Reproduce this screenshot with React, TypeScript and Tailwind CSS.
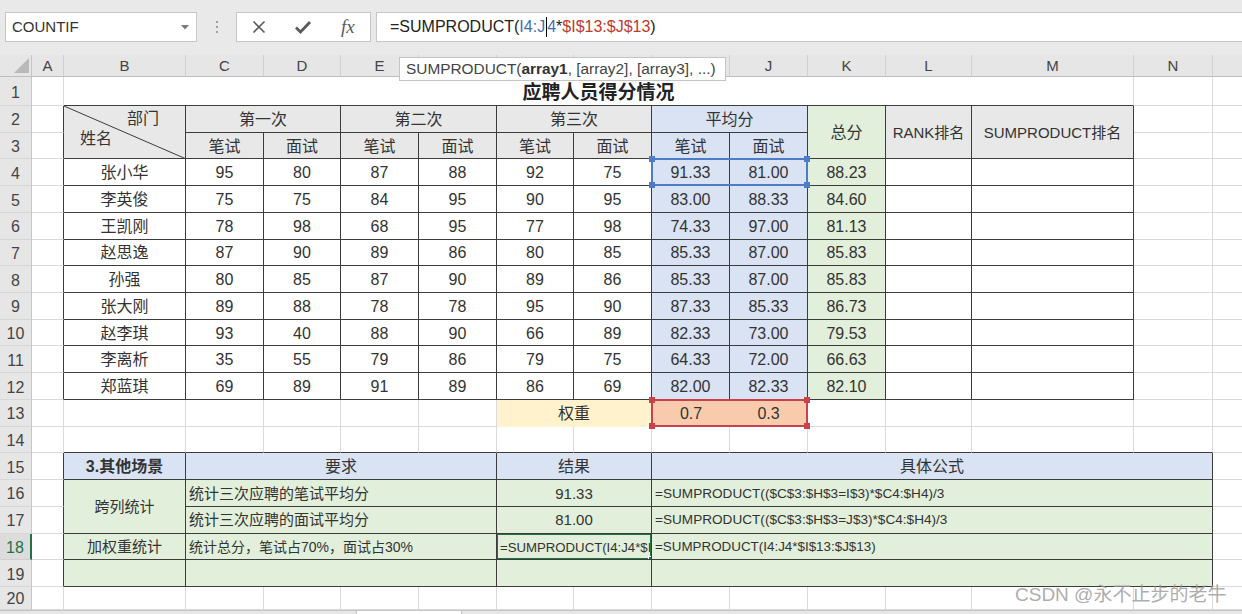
import React from "react";

// cell border presets
const GRID = "border-r border-b border-[#dadada]";
const EDGE = "border-r border-b border-r-[#3c3c3c] border-b-[#dadada]";
const TOP = "border-r border-b border-r-[#dadada] border-b-[#3c3c3c]";
const T = "border-r border-b border-[#3c3c3c] flex items-center justify-center pt-[2px]";

const GRAY = "bg-[#e8e8e8]";
const BLUE = "bg-[#dae3f3]";
const GREEN = "bg-[#e2efda]";

const COLS = ["A", "B", "C", "D", "E", "F", "G", "H", "I", "J", "K", "L", "M", "N", "O"];

const people: [string, number, number, number, number, number, number, string, string, string][] = [
  ["张小华", 95, 80, 87, 88, 92, 75, "91.33", "81.00", "88.23"],
  ["李英俊", 75, 75, 84, 95, 90, 95, "83.00", "88.33", "84.60"],
  ["王凯刚", 78, 98, 68, 95, 77, 98, "74.33", "97.00", "81.13"],
  ["赵思逸", 87, 90, 89, 86, 80, 85, "85.33", "87.00", "85.83"],
  ["孙强", 80, 85, 87, 90, 89, 86, "85.33", "87.00", "85.83"],
  ["张大刚", 89, 88, 78, 78, 95, 90, "87.33", "85.33", "86.73"],
  ["赵李琪", 93, 40, 88, 90, 66, 89, "82.33", "73.00", "79.53"],
  ["李离析", 35, 55, 79, 86, 79, 75, "64.33", "72.00", "66.63"],
  ["郑蓝琪", 69, 89, 91, 89, 86, 69, "82.00", "82.33", "82.10"],
];

// letters hidden under the function tooltip, and O which is off screen
const HIDDEN = ["F", "G", "H", "I", "O"];

const Hdr = ({ n, active }: { n: number; active?: boolean }) => (
  <div
    className={
      active
        ? "flex items-center justify-center pt-[3px] text-[16px] bg-[#dcdcdc] text-[#217346] border-b border-b-[#d0d0d0] border-r-2 border-r-[#217346]"
        : "flex items-center justify-center pt-[3px] text-[16px] bg-[#e6e6e6] text-[#444] border-r border-b border-r-[#c6c6c6] border-b-[#d6d6d6]"
    }
  >
    {n}
  </div>
);

const Range = ({ tone }: { tone: string }) => (
  <div className={`pointer-events-none absolute -inset-px border-2 ${tone}`}>
    <span className="absolute -left-[4px] -top-[4px] h-[6px] w-[6px] bg-current" />
    <span className="absolute -right-[4px] -top-[4px] h-[6px] w-[6px] bg-current" />
    <span className="absolute -left-[4px] -bottom-[4px] h-[6px] w-[6px] bg-current" />
    <span className="absolute -right-[4px] -bottom-[4px] h-[6px] w-[6px] bg-current" />
  </div>
);

const FormulaBar = () => (
  <div className="flex h-[55px] w-[1300px] items-start bg-[#e9e9e9] pl-[5px] pt-[12px]">
    <div className="flex h-[30px] w-[192px] items-center justify-between border border-[#c6c6c6] bg-white pl-[6px] pr-[7px]">
      <span className="text-[15px] text-[#333]">COUNTIF</span>
      <svg width="8" height="5" viewBox="0 0 8 5">
        <path d="M0 0h8L4 4.5z" fill="#7a7a7a" />
      </svg>
    </div>
    <div className="flex h-[30px] w-[39px] flex-col items-center justify-center gap-[3px]">
      <span className="h-[2px] w-[2px] bg-[#a0a0a0]" />
      <span className="h-[2px] w-[2px] bg-[#a0a0a0]" />
      <span className="h-[2px] w-[2px] bg-[#a0a0a0]" />
    </div>
    <div className="flex h-[30px] w-[135px] items-center border border-[#c6c6c6] bg-white">
      <div className="flex w-[45px] justify-center">
        <svg width="16" height="16" viewBox="0 0 16 16">
          <path d="M2.5 2.5l11 11M13.5 2.5l-11 11" stroke="#5a5a5a" strokeWidth="1.6" />
        </svg>
      </div>
      <div className="flex w-[45px] justify-center">
        <svg width="18" height="16" viewBox="0 0 18 16">
          <path d="M2 8.5l4.5 4.5L16 3" stroke="#5a5a5a" strokeWidth="2.8" fill="none" />
        </svg>
      </div>
      <div className="flex w-[45px] justify-center">
        <span className="font-['Liberation_Serif',serif] text-[19px] italic text-[#5a5a5a]">fx</span>
      </div>
    </div>
    <div className="ml-[5px] flex h-[30px] flex-1 items-center border border-[#c6c6c6] bg-white pl-[13px] text-[16px] text-[#222]">
      <span>=SUMPRODUCT(</span>
      <span className="text-[#3f6fb5]">I4:J</span>
      <span className="mx-[0.5px] h-[20px] w-px bg-black" />
      <span className="text-[#3f6fb5]">4</span>
      <span>*</span>
      <span className="text-[#c0392b]">$I$13:$J$13</span>
      <span>)</span>
    </div>
  </div>
);

const Sheet = () => (
  <div className="grid w-[1291px] grid-cols-[32px_32px_122px_78px_77px_78px_78px_77px_78px_78px_78px_78px_86px_162px_79px_78px] grid-rows-[22px_29px_repeat(18,26.72px)_23px] text-[16px] text-[#333]">
    {/* column headers */}
    <div className="flex items-end justify-end border-r border-b border-r-[#c6c6c6] border-b-[#bdbdbd] bg-[#e6e6e6] pb-[3px] pr-[2px]">
      <svg width="15" height="15" viewBox="0 0 15 15">
        <path d="M15 0V15H0z" fill="#b9b9b9" />
      </svg>
    </div>
    {COLS.map((c) => (
      <div
        key={c}
        className="flex items-center justify-center border-r border-b border-r-[#d0d0d0] border-b-[#bdbdbd] bg-[#e6e6e6] pt-[1px] text-[15px] text-[#444]"
      >
        {HIDDEN.includes(c) ? "" : c}
      </div>
    ))}

    {/* row 1 */}
    <Hdr n={1} />
    <div className={GRID} />
    <div className="col-span-12 flex items-center justify-center border-r border-b border-r-[#dadada] border-b-[#3c3c3c] pt-[4px] text-[19px] font-bold text-[#222]">
      应聘人员得分情况
    </div>
    <div className={GRID} />
    <div className={GRID} />

    {/* row 2 */}
    <Hdr n={2} />
    <div className={EDGE} />
    <div className={`relative row-span-2 border-r border-b border-[#3c3c3c] ${GRAY} flex flex-col pt-[3px] text-[16px] leading-[20px]`}>
      <svg className="absolute inset-0 h-full w-full" preserveAspectRatio="none" viewBox="0 0 100 100">
        <line x1="0" y1="0" x2="100" y2="100" stroke="#3c3c3c" strokeWidth="1" vectorEffect="non-scaling-stroke" />
      </svg>
      <span className="pl-[63px]">部门</span>
      <span className="pl-[16px]">姓名</span>
    </div>
    <div className={`${T} col-span-2 ${GRAY}`}>第一次</div>
    <div className={`${T} col-span-2 ${GRAY}`}>第二次</div>
    <div className={`${T} col-span-2 ${GRAY}`}>第三次</div>
    <div className={`${T} col-span-2 ${BLUE}`}>平均分</div>
    <div className={`${T} row-span-2 ${GREEN}`}>总分</div>
    <div className={`${T} row-span-2 ${GRAY} text-[15px]`}>RANK排名</div>
    <div className={`${T} row-span-2 ${GRAY} text-[15px]`}>SUMPRODUCT排名</div>
    <div className={GRID} />
    <div className={GRID} />

    {/* row 3 */}
    <Hdr n={3} />
    <div className={EDGE} />
    <div className={`${T} ${GRAY}`}>笔试</div>
    <div className={`${T} ${GRAY}`}>面试</div>
    <div className={`${T} ${GRAY}`}>笔试</div>
    <div className={`${T} ${GRAY}`}>面试</div>
    <div className={`${T} ${GRAY}`}>笔试</div>
    <div className={`${T} ${GRAY}`}>面试</div>
    <div className={`${T} ${BLUE}`}>笔试</div>
    <div className={`${T} ${BLUE}`}>面试</div>
    <div className={GRID} />
    <div className={GRID} />

    {/* rows 4-12 */}
    {people.map((p, i) => (
      <React.Fragment key={p[0]}>
        <Hdr n={i + 4} />
        <div className={EDGE} />
        <div className={T}>{p[0]}</div>
        {p.slice(1, 7).map((v, j) => (
          <div key={j} className={T}>
            {v}
          </div>
        ))}
        {i === 0 ? (
          <div className={`relative col-span-2 grid grid-cols-[78px_1fr] border-r border-b border-[#3c3c3c] ${BLUE}`}>
            <div className="flex items-center justify-center border-r border-[#3c3c3c] pt-[2px]">{p[7]}</div>
            <div className="flex items-center justify-center pt-[2px]">{p[8]}</div>
            <Range tone="border-[#4d7cc9] text-[#4d7cc9]" />
          </div>
        ) : (
          <>
            <div className={`${T} ${BLUE}`}>{p[7]}</div>
            <div className={`${T} ${BLUE}`}>{p[8]}</div>
          </>
        )}
        <div className={`${T} ${GREEN}`}>{p[9]}</div>
        <div className={T} />
        <div className={T} />
        <div className={GRID} />
        <div className={GRID} />
      </React.Fragment>
    ))}

    {/* row 13 */}
    <Hdr n={13} />
    <div className={GRID} />
    <div className={GRID} />
    <div className={GRID} />
    <div className={GRID} />
    <div className={GRID} />
    <div className={GRID} />
    <div className="col-span-2 flex items-center justify-center border-r border-b border-transparent bg-[#fff2cc] pt-[2px]">权重</div>
    <div className="relative col-span-2 grid grid-cols-[78px_1fr] border-r border-b border-transparent bg-[#f8cbad]">
      <div className="flex items-center justify-center pt-[2px]">0.7</div>
      <div className="flex items-center justify-center pt-[2px]">0.3</div>
      <Range tone="border-[#c8414b] text-[#c8414b]" />
    </div>
    <div className={GRID} />
    <div className={GRID} />
    <div className={GRID} />
    <div className={GRID} />
    <div className={GRID} />

    {/* row 14 */}
    <Hdr n={14} />
    <div className={GRID} />
    {COLS.slice(1, 14).map((c) => (
      <div key={c} className={TOP} />
    ))}
    <div className={GRID} />

    {/* row 15 */}
    <Hdr n={15} />
    <div className={EDGE} />
    <div className={`${T} ${BLUE} font-bold`}>3.其他场景</div>
    <div className={`${T} col-span-4 ${BLUE}`}>要求</div>
    <div className={`${T} col-span-2 ${BLUE}`}>结果</div>
    <div className={`${T} col-span-6 ${BLUE}`}>具体公式</div>
    <div className={GRID} />

    {/* row 16 */}
    <Hdr n={16} />
    <div className={EDGE} />
    <div className={`${T} row-span-2 ${GREEN} text-[15px]`}>跨列统计</div>
    <div className={`${T} col-span-4 ${GREEN} justify-start pl-[3px] text-[15px]`}>统计三次应聘的笔试平均分</div>
    <div className={`${T} col-span-2 ${GREEN} text-[15px]`}>91.33</div>
    <div className={`${T} col-span-6 ${GREEN} justify-start pl-[3px] text-[13.6px]`}>=SUMPRODUCT(($C$3:$H$3=I$3)*$C4:$H4)/3</div>
    <div className={GRID} />

    {/* row 17 */}
    <Hdr n={17} />
    <div className={EDGE} />
    <div className={`${T} col-span-4 ${GREEN} justify-start pl-[3px] text-[15px]`}>统计三次应聘的面试平均分</div>
    <div className={`${T} col-span-2 ${GREEN} text-[15px]`}>81.00</div>
    <div className={`${T} col-span-6 ${GREEN} justify-start pl-[3px] text-[13.6px]`}>=SUMPRODUCT(($C$3:$H$3=J$3)*$C4:$H4)/3</div>
    <div className={GRID} />

    {/* row 18 */}
    <Hdr n={18} active />
    <div className={EDGE} />
    <div className={`${T} ${GREEN} text-[15px]`}>加权重统计</div>
    <div className={`${T} col-span-4 ${GREEN} justify-start pl-[3px] text-[14px]`}>统计总分，笔试占70%，面试占30%</div>
    <div className={`relative col-span-2 flex items-end overflow-hidden border-r border-b border-[#3c3c3c] ${GREEN} pb-[1px] pl-[3px] text-[13.2px]`}>
      <span className="whitespace-nowrap">=SUMPRODUCT(I4:J4*$I</span>
      <div className="pointer-events-none absolute -inset-px border-2 border-[#217346]">
        <span className="absolute -right-[4px] -bottom-[4px] h-[6px] w-[6px] border border-white bg-[#217346]" />
      </div>
    </div>
    <div className={`${T} col-span-6 ${GREEN} justify-start pl-[3px] text-[13.4px]`}>=SUMPRODUCT(I4:J4*$I$13:$J$13)</div>
    <div className={GRID} />

    {/* row 19 */}
    <Hdr n={19} />
    <div className={EDGE} />
    <div className={`${T} ${GREEN}`} />
    <div className={`${T} col-span-4 ${GREEN}`} />
    <div className={`${T} col-span-2 ${GREEN}`} />
    <div className={`${T} col-span-6 ${GREEN}`} />
    <div className={GRID} />

    {/* row 20 */}
    <Hdr n={20} />
    {COLS.map((c) => (
      <div key={c} className={GRID} />
    ))}
  </div>
);

const SheetTabs = () => (
  <div className="flex h-[20px] border-t border-[#c4c4c4] bg-[#e6e6e6]">
    <div className="w-[357px] border-r border-[#c4c4c4]" />
    <div className="w-[105px] border-r border-[#c4c4c4] bg-white" />
    <div className="flex-1" />
  </div>
);

export default function App() {
  return (
    <div className="relative h-[614px] w-[1242px] overflow-hidden bg-white font-['Liberation_Sans','Noto_Sans_CJK_SC',sans-serif] text-[#333]">
      <FormulaBar />
      <Sheet />
      <SheetTabs />
      <div className="absolute left-[399px] top-[57px] flex h-[24px] w-[327px] items-center border border-[#c4c4c4] bg-white px-[6px] text-[15.4px] text-[#444]">
        SUMPRODUCT(<b className="font-bold text-[#333]">array1</b>, [array2], [array3], ...)
      </div>
      <div className="pointer-events-none absolute left-[1015px] top-[581px] whitespace-nowrap text-[19px] text-[#9a9a9a] opacity-80">
        CSDN @永不止步的老牛
      </div>
    </div>
  );
}
